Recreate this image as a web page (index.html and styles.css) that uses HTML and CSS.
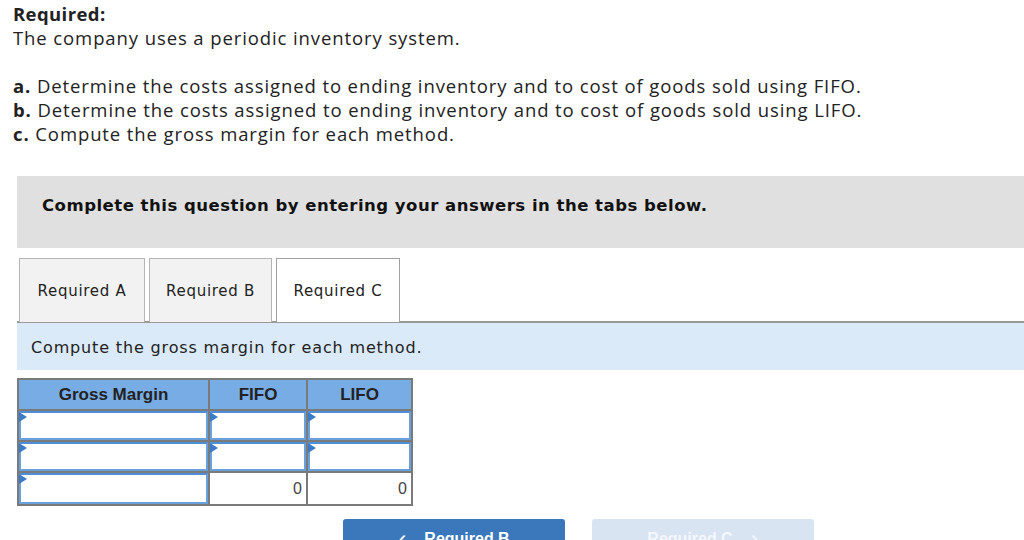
FILE: index.html
```html
<!DOCTYPE html>
<html>
<head>
<meta charset="utf-8">
<link rel="stylesheet" href="styles.css">
</head>
<body>
<div class="intro">
  <p class="req-title">Required:</p>
  <p>The company uses a periodic inventory system.</p>
  <p class="gap"><b>a.</b> Determine the costs assigned to ending inventory and to cost of goods sold using FIFO.</p>
  <p><b>b.</b> Determine the costs assigned to ending inventory and to cost of goods sold using LIFO.</p>
  <p><b>c.</b> Compute the gross margin for each method.</p>
</div>

<div class="instruct">Complete this question by entering your answers in the tabs below.</div>

<div class="tabs">
  <div class="tab">Required A</div>
  <div class="tab">Required B</div>
  <div class="tab active">Required C</div>
</div>

<div class="panel">Compute the gross margin for each method.</div>

<table class="grid">
  <thead>
    <tr><th class="c1">Gross Margin</th><th class="c2">FIFO</th><th class="c3">LIFO</th></tr>
  </thead>
  <tbody>
    <tr>
      <td><div class="inp"><span class="tri"></span></div></td>
      <td><div class="inp"><span class="tri"></span></div></td>
      <td><div class="inp"><span class="tri"></span></div></td>
    </tr>
    <tr>
      <td><div class="inp"><span class="tri"></span></div></td>
      <td><div class="inp"><span class="tri"></span></div></td>
      <td><div class="inp"><span class="tri"></span></div></td>
    </tr>
    <tr>
      <td><div class="inp"><span class="tri"></span></div></td>
      <td class="num">0</td>
      <td class="num">0</td>
    </tr>
  </tbody>
</table>

<div class="nav">
  <div class="btn prev"><span class="chev">&#8249;</span>Required B</div>
  <div class="btn next">Required C<span class="chev">&#8250;</span></div>
</div>
</body>
</html>
```
FILE: styles.css
```css
html, body {
  margin: 0;
  padding: 0;
  background: #fff;
  overflow: hidden;
}
body {
  width: 1024px;
  height: 540px;
}
.intro {
  padding: 0 13px;
  font-family: "Open Sans", "Lato", sans-serif;
  font-size: 18.5px;
  letter-spacing: 0.9px;
  line-height: 24px;
  color: #222;
}
.intro p {
  margin: 0;
}
.intro .req-title {
  font-weight: bold;
  letter-spacing: 0.4px;
  margin-top: 2px;
}
.intro .gap {
  margin-top: 24px;
}
.intro b {
  font-weight: bold;
}
.instruct {
  margin: 30px 0 0 17px;
  height: 72px;
  box-sizing: border-box;
  padding: 20px 0 0 25px;
  background: #e0e0e0;
  font-family: "DejaVu Sans", Verdana, sans-serif;
  font-weight: bold;
  font-size: 16.5px;
  letter-spacing: 0.5px;
  color: #111;
}
.tabs {
  display: flex;
  margin: 10px 0 0 19px;
  gap: 4px;
}
.tab {
  height: 64px;
  box-sizing: border-box;
  border: 1px solid #b5b5b5;
  border-bottom: none;
  background: #f2f2f2;
  font-family: "DejaVu Sans", Verdana, sans-serif;
  font-size: 15px;
  letter-spacing: 0.7px;
  color: #222;
  display: flex;
  align-items: center;
  justify-content: center;
  width: 126px;
}
.tab:nth-child(2) { width: 123px; }
.tab.active {
  width: 124px;
  background: #fff;
  border: 1px solid #a0a0a0;
  border-bottom: none;
  position: relative;
  z-index: 1;
  height: 64px;
}
.panel {
  margin-left: 17px;
  border-top: 2px solid #999;
  background: #dbeaf8;
  height: 47px;
  box-sizing: content-box;
  padding-left: 14px;
  font-family: "DejaVu Sans", Verdana, sans-serif;
  font-size: 16px;
  letter-spacing: 0.85px;
  line-height: 50px;
  color: #222;
  margin-top: -1px;
}
.grid {
  margin: 8px 0 0 17px;
  border-collapse: collapse;
  font-family: "Liberation Sans", Arial, sans-serif;
}
.grid th {
  background: #78ace4;
  font-size: 17px;
  font-weight: bold;
  color: #222;
  height: 29px;
  padding: 0;
  border: 2px solid #7a7a7a;
  text-align: center;
}
.grid .c1 { width: 189px; }
.grid .c2 { width: 96px; }
.grid .c3 { width: 103px; }
.grid td {
  border: 2px solid #7a7a7a;
  padding: 0;
  height: 29px;
  background: #fff;
}
.grid tbody tr:last-child td {
  height: 31px;
}
.inp {
  position: relative;
  height: 100%;
  box-sizing: border-box;
  border: 2px solid #6aa0dc;
  border-top-color: #4f8ed6;
  background: #fff;
}
.tri {
  position: absolute;
  left: -2px;
  top: -1px;
  width: 0;
  height: 0;
  border-top: 5px solid transparent;
  border-bottom: 5px solid transparent;
  border-left: 8px solid #3a7cc8;
}
.grid td.num {
  text-align: right;
  font-size: 16px;
  color: #444;
  padding-right: 4px;
  border-color: #7a7a7a #7a7a7a #7a7a7a #bbb;
}
.nav {
  display: flex;
  gap: 27px;
  margin: 13px 0 0 343px;
}
.btn {
  width: 222px;
  height: 38px;
  border-radius: 3px;
  font-family: "Liberation Sans", Arial, sans-serif;
  font-weight: bold;
  font-size: 16px;
  color: #fff;
  display: flex;
  align-items: center;
  justify-content: center;
  gap: 18px;
  padding-top: 2px;
  box-sizing: border-box;
}
.btn.prev {
  background: #3a77bb;
}
.btn.next {
  background: #d8e4f2;
  color: #f4f7fb;
}
.chev {
  font-weight: normal;
  font-size: 24px;
}
```
